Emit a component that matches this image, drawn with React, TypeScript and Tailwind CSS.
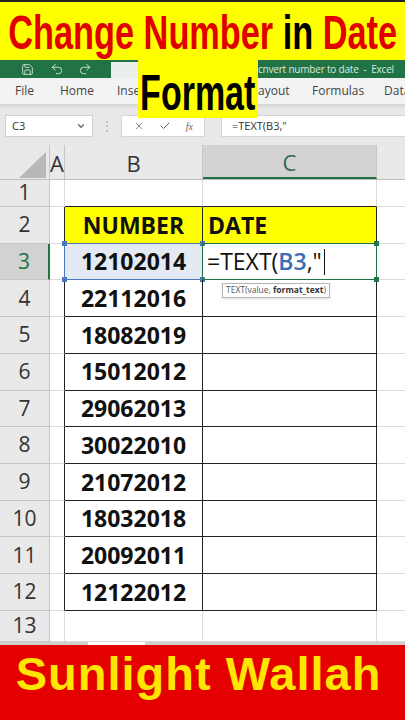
import { Save, Undo2, Redo2, X, Check, ChevronDown } from 'lucide-react';

const sheetFont = { fontFamily: '"Open Sans", "Liberation Sans", sans-serif' };
const bannerFont = { fontFamily: '"Liberation Sans", Arial, sans-serif' };

const values = [
    '12102014', '22112016', '18082019', '15012012', '29062013',
    '30022010', '21072012', '18032018', '20092011', '12122012',
];

type Row = { n: number; h: string; b?: string; c?: string };

const rows: Row[] = [
    { n: 1, h: 'h-[27px]' },
    { n: 2, h: 'h-[36.73px]', b: 'NUMBER', c: 'DATE' },
    ...values.map((v, i) => ({ n: i + 3, h: 'h-[36.73px]', b: v })),
    { n: 13, h: 'h-[31px]' },
];

function SheetRow({ row }: { row: Row }) {
    const inTable = row.n >= 2 && row.n <= 12;
    const isHeader = row.n === 2;
    const isActive = row.n === 3;

    return (
        <div className={`flex ${row.h}`}>
            <div
                className={`w-[50px] shrink-0 flex items-center justify-center text-[21px] border-b ${
                    isActive
                        ? 'bg-[#d2d2d2] text-[#217346] border-r-2 border-r-[#217346] border-b-[#c6c6c6]'
                        : 'bg-[#e9e9e9] text-[#333] border-r border-[#c6c6c6]'
                }`}
            >
                {row.n}
            </div>
            <div
                className={`w-[15px] shrink-0 border-b border-[#dadada] border-r ${
                    inTable ? 'border-r-[#222]' : 'border-r-[#dadada]'
                }`}
            />
            <div
                className={`w-[138px] shrink-0 flex items-center justify-center relative ${
                    inTable ? 'border-r border-b border-[#222]' : 'border-r border-[#dadada] border-b'
                } ${row.n === 1 ? 'border-b-[#222]' : ''} ${isHeader ? 'bg-[#ffff00]' : ''} ${
                    isActive ? 'bg-[#e3eaf4]' : ''
                }`}
            >
                {row.b && <span className="text-[23px] font-bold text-[#111]">{row.b}</span>}
                {isActive && (
                    <>
                        <div className="absolute -inset-[1px] border border-[#4a78b8] pointer-events-none" />
                        <div className="absolute -left-[3px] -top-[3px] w-[5px] h-[5px] bg-[#4a78b8]" />
                        <div className="absolute -left-[3px] -bottom-[3px] w-[5px] h-[5px] bg-[#4a78b8]" />
                        <div className="absolute -right-[3px] -top-[3px] w-[5px] h-[5px] bg-[#4a78b8]" />
                        <div className="absolute -right-[3px] -bottom-[3px] w-[5px] h-[5px] bg-[#4a78b8]" />
                    </>
                )}
            </div>
            <div
                className={`w-[174px] shrink-0 flex items-center relative ${
                    inTable ? 'border-r border-b border-[#222]' : 'border-r border-[#dadada] border-b'
                } ${row.n === 1 ? 'border-b-[#222]' : ''} ${isHeader ? 'bg-[#ffff00]' : ''}`}
            >
                {row.c && <span className="pl-[5px] text-[23px] font-bold text-[#111]">{row.c}</span>}
                {isActive && (
                    <>
                        <div className="absolute -inset-[1px] border border-[#217346] z-10 pointer-events-none" />
                        <div className="absolute -right-[3px] -top-[3px] w-[5px] h-[5px] bg-[#217346] z-10" />
                        <div className="absolute -right-[3px] -bottom-[3px] w-[5px] h-[5px] bg-[#217346] z-10" />
                        <span className="pl-[4px] text-[23px] text-[#111] whitespace-nowrap flex items-center">
                            =TEXT(<span className="text-[#3b6cb4] font-semibold">B3</span>,"
                            <span className="inline-block w-[1.5px] h-[26px] bg-[#111] ml-[2px]" />
                        </span>
                        <div className="absolute left-[19px] top-[39px] z-20 bg-white border border-[#b5b5b5] px-[3px] h-[15px] flex items-center text-[8.5px] text-[#555] whitespace-nowrap shadow-sm">
                            TEXT(value,&nbsp;<span className="font-bold text-[#333]">format_text</span>)
                        </div>
                    </>
                )}
            </div>
            <div className="flex-1 border-b border-[#dadada]" />
        </div>
    );
}

export default function App() {
    return (
        <div className="w-[405px] h-[720px] overflow-hidden relative bg-white flex flex-col" style={sheetFont}>
            {/* Top title banner */}
            <div className="h-[60px] shrink-0 bg-[#ffff00] border-t-2 border-[#222] flex justify-center relative z-20" style={bannerFont}>
                <div className="pt-[6px] whitespace-nowrap text-[49px] leading-none font-bold scale-x-[0.70] text-[#e00000]">
                    Change Number <span className="text-black">in</span> Date
                </div>
            </div>

            {/* Format box overlay */}
            <div className="absolute left-[138px] top-[60px] w-[120px] h-[58px] bg-[#ffff00] z-30 flex justify-center" style={bannerFont}>
                <div className="pt-[8px] whitespace-nowrap text-[50px] leading-none font-bold scale-x-[0.68] text-black">
                    Format
                </div>
            </div>

            {/* Excel title bar */}
            <div className="h-[18px] shrink-0 bg-[#217346] flex items-center text-[#dbe9df] overflow-hidden">
                <Save size={13} strokeWidth={1.5} className="ml-[21px] shrink-0" />
                <Undo2 size={14} strokeWidth={1.5} className="ml-[16px] shrink-0" />
                <Redo2 size={14} strokeWidth={1.5} className="ml-[14px] shrink-0" />
                <div className="ml-[19px] w-[146px] h-[16px] bg-[#e9efeb] self-end shrink-0" />
                <span className="ml-[1px] shrink-0 text-[10px] tracking-[-0.2px] whitespace-nowrap">cnvert number to date&nbsp; -&nbsp; Excel</span>
            </div>

            {/* Ribbon tabs */}
            <div className="h-[26px] shrink-0 bg-[#f3f3f3] flex items-center text-[12px] text-[#444] whitespace-nowrap overflow-hidden">
                <span className="ml-[15px] w-[45px] shrink-0">File</span>
                <span className="w-[57px] shrink-0">Home</span>
                <span className="w-[21px] shrink-0">Inse</span>
                <span className="ml-[120px] w-[54px] shrink-0">ayout</span>
                <span className="w-[72px] shrink-0">Formulas</span>
                <span className="shrink-0">Data</span>
            </div>

            {/* Formula bar */}
            <div className="h-[41px] shrink-0 bg-[#e8e8e8] flex flex-col">
                <div className="h-[5px] bg-gradient-to-b from-[#d4d4d4] to-[#e8e8e8]" />
                <div className="mt-[6px] h-[22px] flex items-stretch">
                    <div className="ml-[5px] w-[88px] shrink-0 bg-white border border-[#cfcfcf] flex items-center justify-between px-[6px] text-[11px] text-[#333]">
                        <span>C3</span>
                        <ChevronDown size={10} strokeWidth={3} className="text-[#666]" />
                    </div>
                    <div className="w-[28px] shrink-0 flex items-center justify-center text-[#b0b0b0] text-[12px]">⋮</div>
                    <div className="w-[84px] shrink-0 bg-white border border-[#d6d6d6] flex items-center justify-around px-[4px] text-[#666]">
                        <X size={12} strokeWidth={1.5} />
                        <Check size={12} strokeWidth={2} />
                        <span className="text-[10px] italic" style={{ fontFamily: '"Liberation Serif", serif' }}>fx</span>
                    </div>
                    <div className="ml-[16px] flex-1 bg-white border border-[#d6d6d6] border-r-0 flex items-center pl-[10px] text-[11px] text-[#333]">
                        =TEXT(B3,"
                    </div>
                </div>
            </div>

            {/* Column headers */}
            <div className="h-[35px] shrink-0 flex bg-[#e9e9e9] text-[22px] text-[#333] border-b border-[#bdbdbd]">
                <div className="w-[50px] shrink-0 border-r border-[#c6c6c6] relative">
                    <svg width="50" height="35" className="absolute inset-0">
                        <polygon points="46,7 46,33 19,33" fill="#b8b8b8" />
                    </svg>
                </div>
                <div className="w-[15px] shrink-0 border-r border-[#c6c6c6] flex items-center justify-center pt-[2px]">A</div>
                <div className="w-[138px] shrink-0 border-r border-[#c6c6c6] flex items-center justify-center pt-[2px]">B</div>
                <div className="w-[174px] shrink-0 bg-[#d3d3d3] border-b-2 border-[#217346] border-r border-r-[#c6c6c6] flex items-center justify-center pt-[2px] text-[#2e6b4a]">
                    C
                </div>
                <div className="flex-1" />
            </div>

            {/* Rows */}
            <div className="flex flex-col">
                {rows.map(r => (
                    <SheetRow key={r.n} row={r} />
                ))}
            </div>

            {/* Sheet tab strip */}
            <div className="h-[3px] shrink-0 bg-[#cfcfcf] flex">
                <div className="ml-[88px] w-[57px] bg-white" />
            </div>

            {/* Bottom banner */}
            <div className="flex-1 bg-[#e50000] flex justify-center pr-[8px]" style={bannerFont}>
                <div className="pt-[5px] whitespace-nowrap text-[47px] leading-none font-bold tracking-[1px] text-[#ffe600]">
                    Sunlight Wallah
                </div>
            </div>
        </div>
    );
}
